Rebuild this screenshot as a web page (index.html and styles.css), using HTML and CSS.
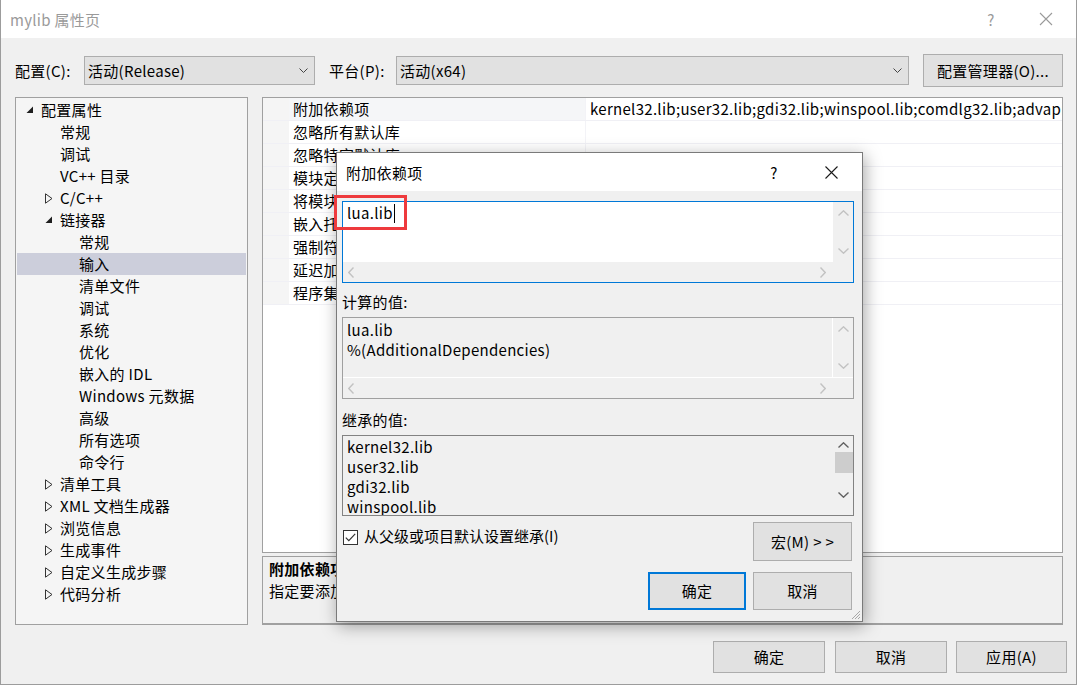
FILE: index.html
```html
<!DOCTYPE html>
<html lang="zh-CN">
<head>
<meta charset="utf-8">
<title>mylib 属性页</title>
<link rel="stylesheet" href="styles.css">
</head>
<body>
<div class="window">
  <div class="titlebar">
    <span class="title">mylib 属性页</span>
    <span class="tb-help">?</span>
    <span class="tb-close"><svg width="14" height="14" viewBox="0 0 14 14"><path d="M1 1L13 13M13 1L1 13" stroke="#9a9a9a" stroke-width="1.1" fill="none"/></svg></span>
  </div>

  <div class="toolbar">
    <span class="lbl lbl-config">配置(C):</span>
    <div class="combo combo-config"><span>活动(Release)</span><svg class="chev" width="9" height="5" viewBox="0 0 9 5"><path d="M0.5 0.5L4.5 4.5L8.5 0.5" stroke="#444" fill="none"/></svg></div>
    <span class="lbl lbl-plat">平台(P):</span>
    <div class="combo combo-plat"><span>活动(x64)</span><svg class="chev" width="9" height="5" viewBox="0 0 9 5"><path d="M0.5 0.5L4.5 4.5L8.5 0.5" stroke="#444" fill="none"/></svg></div>
    <div class="btn btn-mgr">配置管理器(O)...</div>
  </div>

  <div class="main">
    <div class="tree">
      <div class="node l0"><span class="tw"><svg width="8" height="8" viewBox="0 0 8 8"><path d="M7 0.5V7H0.5Z" fill="#1e1e1e"/></svg></span>配置属性</div>
      <div class="node l1"><span class="tw"></span>常规</div>
      <div class="node l1"><span class="tw"></span>调试</div>
      <div class="node l1"><span class="tw"></span>VC++ 目录</div>
      <div class="node l1"><span class="tw"><svg width="8" height="11" viewBox="0 0 8 11"><path d="M0.5 0.8V10.2L7 5.5Z" fill="none" stroke="#333"/></svg></span>C/C++</div>
      <div class="node l1"><span class="tw"><svg width="8" height="8" viewBox="0 0 8 8"><path d="M7 0.5V7H0.5Z" fill="#1e1e1e"/></svg></span>链接器</div>
      <div class="node l2"><span class="tw"></span>常规</div>
      <div class="node l2 sel"><span class="tw"></span>输入</div>
      <div class="node l2"><span class="tw"></span>清单文件</div>
      <div class="node l2"><span class="tw"></span>调试</div>
      <div class="node l2"><span class="tw"></span>系统</div>
      <div class="node l2"><span class="tw"></span>优化</div>
      <div class="node l2"><span class="tw"></span>嵌入的 IDL</div>
      <div class="node l2"><span class="tw"></span>Windows 元数据</div>
      <div class="node l2"><span class="tw"></span>高级</div>
      <div class="node l2"><span class="tw"></span>所有选项</div>
      <div class="node l2"><span class="tw"></span>命令行</div>
      <div class="node l1"><span class="tw"><svg width="8" height="11" viewBox="0 0 8 11"><path d="M0.5 0.8V10.2L7 5.5Z" fill="none" stroke="#333"/></svg></span>清单工具</div>
      <div class="node l1"><span class="tw"><svg width="8" height="11" viewBox="0 0 8 11"><path d="M0.5 0.8V10.2L7 5.5Z" fill="none" stroke="#333"/></svg></span>XML 文档生成器</div>
      <div class="node l1"><span class="tw"><svg width="8" height="11" viewBox="0 0 8 11"><path d="M0.5 0.8V10.2L7 5.5Z" fill="none" stroke="#333"/></svg></span>浏览信息</div>
      <div class="node l1"><span class="tw"><svg width="8" height="11" viewBox="0 0 8 11"><path d="M0.5 0.8V10.2L7 5.5Z" fill="none" stroke="#333"/></svg></span>生成事件</div>
      <div class="node l1"><span class="tw"><svg width="8" height="11" viewBox="0 0 8 11"><path d="M0.5 0.8V10.2L7 5.5Z" fill="none" stroke="#333"/></svg></span>自定义生成步骤</div>
      <div class="node l1"><span class="tw"><svg width="8" height="11" viewBox="0 0 8 11"><path d="M0.5 0.8V10.2L7 5.5Z" fill="none" stroke="#333"/></svg></span>代码分析</div>
    </div>

    <div class="right">
      <div class="grid">
        <div class="row first"><span class="gut"></span><span class="name">附加依赖项</span><span class="val">kernel32.lib;user32.lib;gdi32.lib;winspool.lib;comdlg32.lib;advapi32.lib;shell32.lib;ole32.lib</span></div>
        <div class="row"><span class="gut"></span><span class="name">忽略所有默认库</span><span class="val"></span></div>
        <div class="row"><span class="gut"></span><span class="name">忽略特定默认库</span><span class="val"></span></div>
        <div class="row"><span class="gut"></span><span class="name">模块定义文件</span><span class="val"></span></div>
        <div class="row"><span class="gut"></span><span class="name">将模块添加到程序集</span><span class="val"></span></div>
        <div class="row"><span class="gut"></span><span class="name">嵌入托管资源文件</span><span class="val"></span></div>
        <div class="row"><span class="gut"></span><span class="name">强制符号引用</span><span class="val"></span></div>
        <div class="row"><span class="gut"></span><span class="name">延迟加载的 DLL</span><span class="val"></span></div>
        <div class="row"><span class="gut"></span><span class="name">程序集链接资源</span><span class="val"></span></div>
      </div>
      <div class="desc">
        <div class="desc-title">附加依赖项</div>
        <div class="desc-text">指定要添加到链接命令行的附加项。[例如 kernel32.lib]</div>
      </div>
    </div>
  </div>

  <div class="footer">
    <div class="btn fbtn">确定</div>
    <div class="btn fbtn">取消</div>
    <div class="btn fbtn last">应用(A)</div>
  </div>

  <div class="dialog">
    <div class="dlg-title">
      <span class="dlg-name">附加依赖项</span>
      <span class="dlg-help">?</span>
      <span class="dlg-close"><svg width="13" height="13" viewBox="0 0 13 13"><path d="M0.5 0.5L12.5 12.5M12.5 0.5L0.5 12.5" stroke="#1a1a1a" stroke-width="1.1" fill="none"/></svg></span>
    </div>
    <div class="dlg-body">
      <div class="sbox edit">
        <div class="sc-content"><span class="edit-text">lua.lib</span><span class="caret"></span></div>
        <div class="vscroll"><svg width="11" height="6" viewBox="0 0 11 6"><path d="M0.5 5.5L5.5 0.8L10.5 5.5" stroke="#c2c2c2" stroke-width="1.4" fill="none"/></svg><svg width="11" height="6" viewBox="0 0 11 6"><path d="M0.5 0.5L5.5 5.2L10.5 0.5" stroke="#c2c2c2" stroke-width="1.4" fill="none"/></svg></div>
        <div class="hscroll"><svg width="6" height="11" viewBox="0 0 6 11"><path d="M5.5 0.5L0.8 5.5L5.5 10.5" stroke="#c2c2c2" stroke-width="1.4" fill="none"/></svg><svg width="6" height="11" viewBox="0 0 6 11"><path d="M0.5 0.5L5.2 5.5L0.5 10.5" stroke="#c2c2c2" stroke-width="1.4" fill="none"/></svg></div>
      </div>

      <div class="dlg-label first-label">计算的值:</div>
      <div class="sbox computed">
        <div class="sc-content lines"><div>lua.lib</div><div>%(AdditionalDependencies)</div></div>
        <div class="vscroll"><svg width="11" height="6" viewBox="0 0 11 6"><path d="M0.5 5.5L5.5 0.8L10.5 5.5" stroke="#c2c2c2" stroke-width="1.4" fill="none"/></svg><svg width="11" height="6" viewBox="0 0 11 6"><path d="M0.5 0.5L5.5 5.2L10.5 0.5" stroke="#c2c2c2" stroke-width="1.4" fill="none"/></svg></div>
        <div class="hscroll"><svg width="6" height="11" viewBox="0 0 6 11"><path d="M5.5 0.5L0.8 5.5L5.5 10.5" stroke="#c2c2c2" stroke-width="1.4" fill="none"/></svg><svg width="6" height="11" viewBox="0 0 6 11"><path d="M0.5 0.5L5.2 5.5L0.5 10.5" stroke="#c2c2c2" stroke-width="1.4" fill="none"/></svg></div>
      </div>

      <div class="dlg-label second-label">继承的值:</div>
      <div class="sbox inherited">
        <div class="sc-content lines"><div>kernel32.lib</div><div>user32.lib</div><div>gdi32.lib</div><div>winspool.lib</div><div>comdlg32.lib</div></div>
        <div class="vscroll active"><svg width="11" height="6" viewBox="0 0 11 6"><path d="M0.5 5.5L5.5 0.8L10.5 5.5" stroke="#606060" stroke-width="1.4" fill="none"/></svg><span class="thumb"></span><svg width="11" height="6" viewBox="0 0 11 6"><path d="M0.5 0.5L5.5 5.2L10.5 0.5" stroke="#606060" stroke-width="1.4" fill="none"/></svg></div>
      </div>

      <div class="opts">
        <div class="check-wrap">
          <span class="checkbox"><svg width="11" height="9" viewBox="0 0 11 9"><path d="M0.8 4.6L3.8 7.6L10.2 0.8" stroke="#333" stroke-width="1.2" fill="none"/></svg></span>
          <span class="check-label">从父级或项目默认设置继承(I)</span>
        </div>
        <div class="btn macro">宏(M) &gt; &gt;</div>
      </div>

      <div class="dlg-buttons">
        <div class="btn dbtn primary">确定</div>
        <div class="btn dbtn">取消</div>
      </div>
    </div>
    <span class="highlight"></span>
    <svg class="grip" width="11" height="11" viewBox="0 0 11 11"><path d="M10 2L2 10M10 5L5 10M10 8L8 10" stroke="#a8a8a8" stroke-width="1" fill="none"/></svg>
  </div>
</div>
</body>
</html>
```

FILE: styles.css
```css
* { box-sizing: border-box; }
html, body { margin: 0; padding: 0; }
body {
  width: 1077px;
  height: 685px;
  overflow: hidden;
  font-family: "Noto Sans CJK SC", "Noto Sans", sans-serif;
  font-size: 15px;
  letter-spacing: 0.3px;
  color: #000;
  background: #f0f0f0;
}
.window {
  position: relative;
  width: 1077px;
  height: 685px;
  border: 1px solid #9c9c9c;
  border-top: none;
  background: #f0f0f0;
  display: flex;
  flex-direction: column;
}
.titlebar {
  height: 38px;
  background: #fff;
  display: flex;
  align-items: center;
  padding-left: 9px;
  flex-shrink: 0;
}
.title { color: #9a9a9a; font-size: 15px; flex: 1; }
.tb-help { color: #9a9a9a; width: 20px; text-align: center; margin-right: 38px; font-size: 15px; }
.tb-close { width: 14px; height: 14px; margin-right: 23px; display: flex; }

.toolbar {
  display: flex;
  align-items: center;
  height: 33px;
  margin-top: 16px;
  padding-left: 14px;
}
.lbl { line-height: 20px; }
.lbl-config { width: 69px; }
.lbl-plat { width: 67px; margin-left: 14px; }
.combo {
  height: 29px;
  background: #e1e1e1;
  border: 1px solid #adadad;
  display: flex;
  align-items: center;
  padding-left: 3px;
  padding-right: 6px;
  justify-content: space-between;
}
.combo-config { width: 231px; }
.combo-plat { width: 513px; }
.btn {
  background: #e1e1e1;
  border: 1px solid #adadad;
  display: flex;
  align-items: center;
  justify-content: center;
  line-height: 20px;
}
.btn-mgr { width: 140px; height: 33px; margin-left: 14px; }

.main {
  display: flex;
  margin-top: 10px;
  padding-left: 14px;
  height: 528px;
}
.tree {
  width: 233px;
  height: 528px;
  border: 1px solid #a0a0a0;
  background: #f5f5f5;
  padding-top: 1px;
}
.node {
  height: 22px;
  line-height: 22px;
  display: flex;
  align-items: center;
  white-space: nowrap;
  margin: 0 1px;
}
.node.l0 { padding-left: 9px; }
.node.l1 { padding-left: 28px; }
.node.l2 { padding-left: 47px; }
.node.sel { background: #cccedb; }
.tw { width: 15px; height: 22px; display: flex; align-items: center; flex-shrink: 0; }

.right {
  margin-left: 14px;
  width: 801px;
  display: flex;
  flex-direction: column;
}
.grid {
  height: 457px;
  border: 1px solid #a0a0a0;
  background: #fff;
}
.row {
  display: flex;
  height: 23px;
  border-bottom: 1px solid #f0f0f5;
  line-height: 22px;
  white-space: nowrap;
}
.gut { width: 26px; background: #f5f5f5; flex-shrink: 0; }
.name { width: 297px; padding-left: 4px; flex-shrink: 0; border-right: 1px solid #f3f3f7; }
.row.first .name { background: #f5f6f8; }
.val { flex: 1; padding-left: 4px; overflow: hidden; }
.desc {
  margin-top: 3px;
  height: 69px;
  border: 1px solid #a0a0a0;
  border-bottom: 2px solid #a0a0a0;
  padding: 1px 0 0 6px;
}
.desc-title { font-weight: bold; line-height: 22px; }
.desc-text { line-height: 22px; white-space: nowrap; }

.footer {
  display: flex;
  justify-content: flex-end;
  margin-top: 16px;
  padding-right: 9px;
  gap: 10px;
}
.fbtn { width: 112px; height: 32px; }
.fbtn.last { width: 111px; margin-left: -1px; }

/* dialog */
.dialog {
  position: absolute;
  left: 335px;
  top: 152px;
  width: 527px;
  height: 470px;
  border: 1px solid #7a7a7a;
  background: #f0f0f0;
  box-shadow: 2px 4px 16px rgba(0,0,0,0.35);
}
.dlg-title {
  height: 38px;
  background: #fff;
  display: flex;
  align-items: center;
  padding-left: 9px;
}
.dlg-name { flex: 1; }
.dlg-help { width: 20px; text-align: center; margin-right: 41px; }
.dlg-close { width: 13px; height: 13px; display: flex; margin-right: 24px; }
.dlg-body {
  padding: 10px 8px 0 5px;
}
.sbox {
  display: grid;
  grid-template-columns: 1fr 20px;
  grid-template-rows: 1fr 20px;
  border: 1px solid #a0a0a0;
}
.sbox.edit { height: 82px; border-color: #0078d7; background: #f0f0f0; }
.sbox.computed { height: 82px; background: #f0f0f0; }
.sbox.inherited { height: 81px; grid-template-rows: 1fr; border-color: #828282; background: #f0f0f0; }
.sc-content {
  padding: 1px 0 0 4px;
  line-height: 20px;
  overflow: hidden;
  white-space: nowrap;
}
.edit .sc-content { background: #fff; display: flex; align-items: flex-start; }
.computed .sc-content { border-right: 1px solid #fff; border-bottom: 1px solid #fff; padding-top: 2px; }
.inherited .sc-content { padding-top: 1px; }
.caret { display: inline-block; width: 1px; height: 19px; background: #000; margin-top: 1px; margin-left: 1px; }
.vscroll {
  display: flex;
  flex-direction: column;
  justify-content: space-between;
  align-items: center;
  padding: 8px 0 8px 1px;
}
.computed .vscroll { border-bottom: 1px solid #fff; }
.vscroll.active { padding: 6px 0 8px 1px; justify-content: flex-start; }
.vscroll.active .thumb { width: 18px; height: 21px; background: #cdcdcd; margin: 4px 0 19px 0; }
.hscroll {
  grid-column: 1 / span 2;
  display: flex;
  justify-content: space-between;
  align-items: center;
  padding: 0 27px 0 5px;
}
.dlg-label { line-height: 22px; }
.first-label { margin-top: 8px; margin-bottom: 4px; }
.second-label { margin-top: 10px; margin-bottom: 4px; }
.opts {
  display: flex;
  justify-content: space-between;
  margin-top: 6px;
  margin-right: 2px;
}
.check-wrap { display: flex; align-items: flex-start; padding-left: 1px; }
.checkbox {
  width: 15px;
  height: 15px;
  border: 1px solid #333;
  background: #fff;
  margin-top: 8px;
  display: flex;
  align-items: center;
  justify-content: center;
}
.check-label { margin-left: 6px; margin-top: 4px; line-height: 20px; letter-spacing: 0; }
.macro { width: 99px; height: 39px; }
.dlg-buttons {
  display: flex;
  justify-content: flex-end;
  gap: 7px;
  margin-top: 11px;
  margin-right: 2px;
}
.dbtn { width: 99px; height: 38px; }
.dbtn.primary { width: 98px; border: 2px solid #0078d7; }
.highlight {
  position: absolute;
  left: -3px;
  top: 42px;
  width: 73px;
  height: 35px;
  border: 3px solid #ee3a3d;
}
.grip { position: absolute; right: 1px; bottom: 1px; }
```
